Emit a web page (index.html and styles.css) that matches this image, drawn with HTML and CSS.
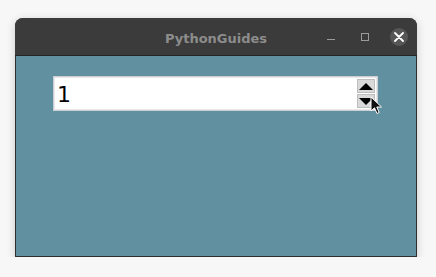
FILE: index.html
```html
<!DOCTYPE html>
<html lang="en">
<head>
    <meta charset="UTF-8">
    <title>PythonGuides</title>
    <link rel="stylesheet" href="styles.css">
</head>
<body>
    <div class="window">
        <div class="titlebar">
            <span class="title">PythonGuides</span>
            <div class="controls">
                <span class="minimize"></span>
                <span class="maximize"></span>
                <span class="close">
                    <svg width="10" height="10" viewBox="0 0 10 10">
                        <path d="M1 1 L9 9 M9 1 L1 9" stroke="#fff" stroke-width="1.8" stroke-linecap="round"/>
                    </svg>
                </span>
            </div>
        </div>
        <div class="content">
            <div class="spinbox">
                <span class="value">1</span>
                <div class="arrows">
                    <div class="arrow up"></div>
                    <div class="arrow down"></div>
                </div>
                <!-- mouse pointer over the down button -->
                <svg class="pointer" width="14" height="20" viewBox="0 0 14 20">
                    <path d="M1 1 L1 15 L4.5 11.8 L7 17.5 L9.2 16.5 L6.8 11 L11.5 11 Z" fill="#111" stroke="#fff" stroke-width="1"/>
                </svg>
            </div>
        </div>
    </div>
</body>
</html>
```

FILE: styles.css
```css
body {
    margin: 0;
    padding: 18px 0 0 15px;
    background-color: #f7f7f7;
    font-family: 'DejaVu Sans', sans-serif;
}
.window {
    width: 402px;
    height: 239px;
    box-sizing: border-box;
    border: 1px solid #2e2e2e;
    border-top: none;
    border-radius: 8px 8px 0 0;
    box-shadow: 0 2px 10px rgba(0, 0, 0, 0.18);
    display: flex;
    flex-direction: column;
    background-color: #6190a1;
}
.titlebar {
    height: 37px;
    background-color: #3b3b3b;
    border-bottom: 1px solid #242424;
    border-radius: 8px 8px 0 0;
    margin: 0 -1px;
    position: relative;
    display: flex;
    align-items: center;
    justify-content: center;
}
.title {
    color: #8c8c8c;
    font-weight: bold;
    font-size: 13px;
    margin-top: 3px;
}
.controls {
    position: absolute;
    right: 9px;
    top: 10px;
    display: flex;
    align-items: center;
}
.minimize {
    width: 8px;
    height: 1px;
    background-color: #9a9a9a;
    margin-top: 5px;
    margin-right: 26px;
}
.maximize {
    width: 6px;
    height: 6px;
    border: 1px solid #9a9a9a;
    margin-right: 21px;
}
.close {
    width: 18px;
    height: 18px;
    border-radius: 50%;
    background-color: #565656;
    display: flex;
    align-items: center;
    justify-content: center;
}
.content {
    flex: 1;
    padding: 20px 0 0 37px;
}
.spinbox {
    width: 325px;
    height: 35px;
    box-sizing: border-box;
    background-color: #fff;
    border: 1px solid #c9cfd2;
    box-shadow: inset 0 0 0 1px #e9e9e9;
    display: flex;
    align-items: center;
    position: relative;
}
.value {
    flex: 1;
    font-size: 22px;
    color: #000;
    padding-left: 3px;
    margin-top: 1px;
}
.arrows {
    display: flex;
    flex-direction: column;
    gap: 1px;
    margin-right: 2px;
}
.arrow {
    width: 18px;
    height: 14px;
    box-sizing: border-box;
    background-color: #d9d9d9;
    border: 1px solid #bdbdbd;
    display: flex;
    align-items: center;
    justify-content: center;
}
.arrow::after {
    content: '';
    border-left: 7px solid transparent;
    border-right: 7px solid transparent;
}
.up::after {
    border-bottom: 7px solid #000;
}
.down::after {
    border-top: 7px solid #000;
}
.pointer {
    position: absolute;
    left: 316px;
    top: 19px;
}
```
